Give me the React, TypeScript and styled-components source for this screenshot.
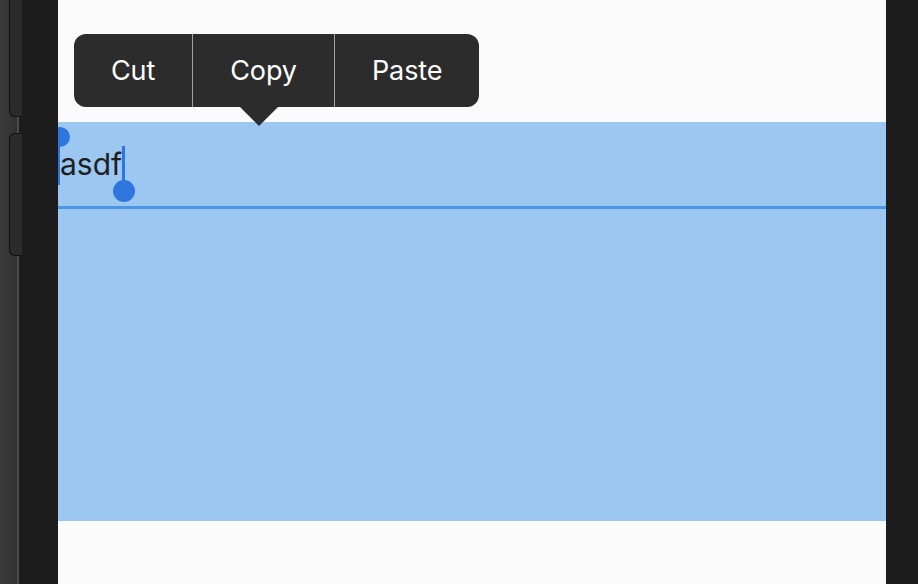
import React from "react";
import styled, { createGlobalStyle } from "styled-components";

const Global = createGlobalStyle`
  html, body { margin: 0; padding: 0; background: #1c1c1c; }
  body { font-family: Inter, "Noto Sans", sans-serif; }
`;

const Device = styled.div`
  display: flex;
  width: 918px;
  height: 584px;
  overflow: hidden;
`;

const LeftFrame = styled.div`
  position: relative;
  width: 58px;
  flex: none;
  background: linear-gradient(
    to right,
    #3b3b3b 0,
    #313131 17px,
    #4c4c4c 17px,
    #4c4c4c 19px,
    #1c1c1c 19px
  );
`;

const SideButton = styled.div<{ $top: number; $height: number }>`
  position: absolute;
  left: 9px;
  top: ${(p) => p.$top}px;
  width: 13px;
  height: ${(p) => p.$height}px;
  box-sizing: border-box;
  background: #2b2b2b;
  border: 1.5px solid #111;
  border-right: none;
  border-radius: 6px 0 0 6px;
`;

const RightFrame = styled.div`
  width: 32px;
  flex: none;
  background: #1c1c1c;
`;

const Screen = styled.div`
  position: relative;
  flex: 1;
  display: flex;
  flex-direction: column;
  padding-top: 122px;
  background: #fafafa;
  overflow: hidden;
`;

const Popover = styled.div`
  position: absolute;
  left: 16px;
  top: 34px;
  height: 73px;
  display: flex;
  align-items: stretch;
  background: #2c2c2c;
  border-radius: 12px;
  z-index: 2;
`;

const Segment = styled.div`
  display: flex;
  align-items: center;
  padding: 0 37px;
  color: #ffffff;
  font-size: 27px;
  font-weight: 400;
  letter-spacing: -0.1px;
`;

const Divider = styled.div`
  width: 1px;
  background: #a0a0a0;
`;

const Arrow = styled.div`
  position: absolute;
  left: 166px;
  top: 73px;
  width: 0;
  height: 0;
  border-left: 19px solid transparent;
  border-right: 19px solid transparent;
  border-top: 19px solid #2c2c2c;
`;

const Selection = styled.div`
  height: 399px;
  background: #9bc7f1;
`;

const Field = styled.div`
  height: 87px;
  box-sizing: border-box;
  padding: 25px 0 0 2px;
  border-bottom: 3px solid #4a95e6;
`;

const Text = styled.span`
  position: relative;
  display: inline-block;
  font-size: 30px;
  line-height: 34px;
  color: #1f1f1f;
`;

const Handle = styled.span<{ $end?: boolean }>`
  position: absolute;
  width: ${(p) => (p.$end ? 3 : 2)}px;
  background: #2e75de;
  ${(p) =>
    p.$end
      ? `left: 62px; top: -1px; height: 45px;`
      : `left: -2px; top: -10px; height: 48px;`}
  &::after {
    content: "";
    position: absolute;
    width: ${(p) => (p.$end ? 22 : 20)}px;
    height: ${(p) => (p.$end ? 22 : 20)}px;
    border-radius: 50%;
    background: #2e75de;
    ${(p) =>
      p.$end
        ? `left: -9.5px; bottom: -11px;`
        : `left: -8px; top: -10px;`}
  }
`;

export default function App() {
  return (
    <>
      <Global />
      <Device>
        <LeftFrame>
          <SideButton $top={-12} $height={129} />
          <SideButton $top={133} $height={123} />
        </LeftFrame>
        <Screen>
          <Popover>
            <Segment>Cut</Segment>
            <Divider />
            <Segment>Copy</Segment>
            <Divider />
            <Segment>Paste</Segment>
            <Arrow />
          </Popover>
          <Selection>
            <Field>
              <Text>
                <Handle />
                asdf
                <Handle $end />
              </Text>
            </Field>
          </Selection>
        </Screen>
        <RightFrame />
      </Device>
    </>
  );
}
